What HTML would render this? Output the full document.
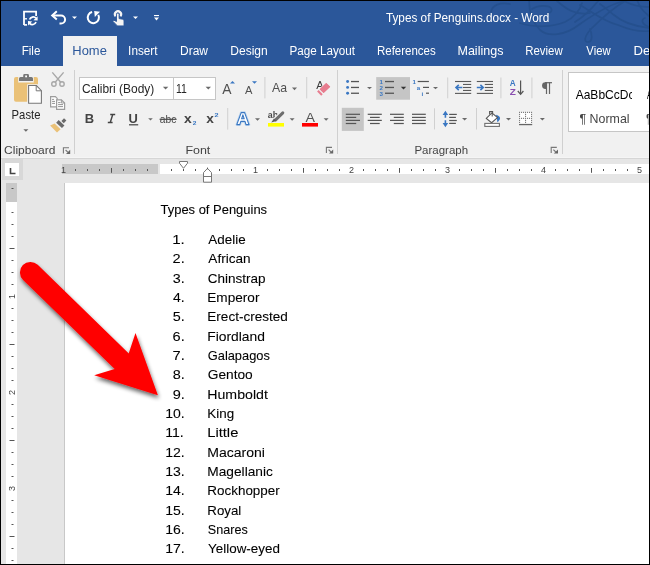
<!DOCTYPE html>
<html><head><meta charset="utf-8"><title>Types of Penguins.docx - Word</title>
<style>html,body{margin:0;padding:0;width:650px;height:565px;overflow:hidden;background:#000}svg{display:block;will-change:transform}text{font-family:"Liberation Sans",sans-serif}</style>
</head><body>
<svg width="650" height="565" viewBox="0 0 650 565" font-family="Liberation Sans, sans-serif"><rect x="0" y="0" width="650" height="565" fill="#000"/>
<rect x="1" y="1" width="648" height="65" fill="#2B579A"/>
<rect x="1" y="66" width="648" height="92" fill="#F1F1F1"/>
<rect x="1" y="157" width="648" height="1" fill="#F5F5F5"/>
<rect x="1" y="158" width="648" height="1" fill="#D6D6D6"/>
<rect x="1" y="159" width="648" height="405" fill="#E6E6E6"/>
<rect x="63" y="36" width="54" height="31" fill="#F1F1F1"/>
<g fill="none" stroke="#25508E" stroke-width="1.7" stroke-linecap="round"><path d="M491,12 C492,5 500,2 510,4"/><path d="M529,0 C529,10 532,22 540,30 C548,37 565,36 580,24 C600,10 615,2 626,1"/><path d="M520,23 C535,28 552,27 565,22 C575,17 580,10 582,3"/><path d="M532,9 C538,5 548,5 551,8 C553,11 550,13 548,13"/><path d="M557,1 C565,8 575,16 590,13"/><path d="M580,5 C592,12 605,22 618,25 C630,30 640,32 649,31"/><path d="M599,0 C594,6 588,14 575,22"/><path d="M625,1 C615,7 605,15 592,28 C585,35 583,42 588,42 C593,42 592,34 590,29"/><path d="M600,4 C606,8 610,12 614,15 C622,22 632,26 649,28"/><path d="M626,2 C632,5 640,7 649,7"/><path d="M637,0 C639,5 641,10 649,16"/><path d="M645,18 C641,19 641,24 649,27"/></g>
<text transform="translate(385.94,21.60) scale(0.9004,1)" font-size="13.08" fill="#fff" font-weight="normal" >Types of Penguins.docx - Word</text>
<text transform="translate(21.64,55.10) scale(0.8912,1)" font-size="13.08" fill="#fff" font-weight="normal" >File</text>
<text transform="translate(72.34,55.10) scale(0.9894,1)" font-size="13.08" fill="#2B579A" font-weight="normal" >Home</text>
<text transform="translate(128.12,55.10) scale(0.9007,1)" font-size="13.08" fill="#fff" font-weight="normal" >Insert</text>
<text transform="translate(180.02,55.10) scale(0.9157,1)" font-size="13.08" fill="#fff" font-weight="normal" >Draw</text>
<text transform="translate(230.31,55.10) scale(0.9201,1)" font-size="13.08" fill="#fff" font-weight="normal" >Design</text>
<text transform="translate(289.44,55.10) scale(0.8937,1)" font-size="13.08" fill="#fff" font-weight="normal" >Page Layout</text>
<text transform="translate(376.96,55.10) scale(0.8798,1)" font-size="13.08" fill="#fff" font-weight="normal" >References</text>
<text transform="translate(457.47,55.10) scale(0.9582,1)" font-size="13.08" fill="#fff" font-weight="normal" >Mailings</text>
<text transform="translate(525.26,55.10) scale(0.8749,1)" font-size="13.08" fill="#fff" font-weight="normal" >Review</text>
<text transform="translate(586.35,55.10) scale(0.8611,1)" font-size="13.08" fill="#fff" font-weight="normal" >View</text>
<text transform="translate(633.53,55.10) scale(1.0000,1)" font-size="13.08" fill="#fff" font-weight="normal" >Developer</text>
<rect x="74.0" y="70" width="1" height="84" fill="#D0D0D0"/>
<rect x="337.0" y="70" width="1" height="84" fill="#D0D0D0"/>
<rect x="562.0" y="70" width="1" height="84" fill="#D0D0D0"/>
<text transform="translate(11.57,119.00) scale(0.9046,1)" font-size="12.50" fill="#262626" font-weight="normal" >Paste</text>
<text transform="translate(4.10,154.00) scale(1.0301,1)" font-size="11.63" fill="#444" font-weight="normal" >Clipboard</text>
<text transform="translate(185.38,153.60) scale(1.0716,1)" font-size="11.63" fill="#444" font-weight="normal" >Font</text>
<text transform="translate(414.46,153.70) scale(0.9881,1)" font-size="11.63" fill="#444" font-weight="normal" >Paragraph</text>
<rect x="79.5" y="77.5" width="136" height="22" fill="#fff" stroke="#C6C6C6"/>
<rect x="173" y="78" width="1" height="21" fill="#C6C6C6"/>
<text transform="translate(81.90,92.70) scale(0.9566,1)" font-size="12.50" fill="#262626" font-weight="normal" >Calibri (Body)</text>
<text transform="translate(175.91,92.70) scale(0.8357,1)" font-size="12.50" fill="#262626" font-weight="normal" >11</text>
<rect x="568.5" y="72.5" width="90" height="59" fill="#fff" stroke="#C6C6C6"/>
<clipPath id="stc"><rect x="569" y="73" width="63" height="58"/></clipPath>
<g clip-path="url(#stc)">
<text transform="translate(575.68,98.60) scale(0.9622,1)" font-size="12.50" fill="#000" font-weight="normal" >AaBbCcDc</text>
</g>
<text transform="translate(646.98,98.60) scale(0.6042,1)" font-size="12.50" fill="#000" font-weight="normal" >A</text>
<text transform="translate(646.19,122.80) scale(0.6167,1)" font-size="12.50" fill="#444" font-weight="normal" >¶</text>
<text transform="translate(579.50,122.80) scale(0.9924,1)" font-size="12.50" fill="#444" font-weight="normal" >¶ Normal</text>
<path d="M24,25 V11.6 H36.1 V16" fill="none" stroke="#fff" stroke-width="1.8"/>
<path d="M24,24.9 H27" stroke="#fff" stroke-width="1.6"/>
<path d="M24.5,18.8 H27" stroke="#fff" stroke-width="1.3"/>
<path d="M29.6,19.6 A3.8,3.8 0 0 1 36,18.2" fill="none" stroke="#fff" stroke-width="1.7"/>
<path d="M37.6,16.2 L37.6,20.6 L33.4,20.2 Z" fill="#fff"/>
<path d="M36,22 A3.8,3.8 0 0 1 29.6,23.4" fill="none" stroke="#fff" stroke-width="1.7"/>
<path d="M28,25.4 L28,21 L32.2,21.4 Z" fill="#fff"/>
<path d="M53.5,15.4 H61 A4.1,4.1 0 0 1 61,23.6 H59.5" fill="none" stroke="#fff" stroke-width="2"/>
<path d="M56.8,11.2 L52.2,15.4 L56.8,19.6" fill="none" stroke="#fff" stroke-width="2"/>
<path d="M72,16.4 h5 l-2.5,2.6 z" fill="#fff"/>
<path d="M92.1,12.05 A5.6,5.6 0 1 0 98.3,14.9" fill="none" stroke="#fff" stroke-width="2"/>
<path d="M94.2,10.9 L100,11.7 L94.8,16.9 Z" fill="#fff"/>
<path d="M115.7,16.3 A3,3 0 1 1 120.3,16.3" fill="none" stroke="#F4F4F4" stroke-width="2.3"/>
<path d="M116.5,14.3 a1.3,1.3 0 0 1 2.6,0 V18.6 L122.6,19.2 a1.6,1.6 0 0 1 1.4,1.6 V25.9 H117.4 L112.8,21.2 L113.8,20.2 L116.5,21.4 Z" fill="#F4F4F4" stroke="#2B579A" stroke-width="0.9"/>
<path d="M133,16.4 h5 l-2.5,2.6 z" fill="#fff"/>
<rect x="154" y="15" width="5" height="1.1" fill="#fff"/>
<path d="M154,17.6 h5 l-2.5,3 z" fill="#fff"/>
<path d="M16,77 H18.2 V82.4 H33.8 V77 H36 a2,2 0 0 1 2,2 V84.2 H27.2 V101.8 H16 a2,2 0 0 1 -2,-2 V79 a2,2 0 0 1 2,-2 Z" fill="#EAC177"/>
<path d="M19,81 V78.6 a1.5,1.5 0 0 1 1.5,-1.5 H23.2 V75.4 a1.3,1.3 0 0 1 1.3,-1.3 H27.7 a1.3,1.3 0 0 1 1.3,1.3 V77.1 H31.5 a1.5,1.5 0 0 1 1.5,1.5 V81 Z" fill="#777"/>
<rect x="25.2" y="75.5" width="1.8" height="1.8" fill="#fff"/>
<path d="M28.6,85.5 H36.4 L41.4,90.6 V103.3 H28.6 Z" fill="#fff" stroke="#777" stroke-width="1.1"/>
<path d="M36.2,85.6 V90.8 H41.3" fill="none" stroke="#777" stroke-width="1"/>
<g fill="none" stroke="#A8A8A8" stroke-width="1.4"><circle cx="53.9" cy="84" r="2.2"/><circle cx="62" cy="84" r="2.2"/><path d="M55.2,82.2 L63.6,72.4 M60.7,82.2 L52.3,72.4"/></g>
<path d="M50.6,106.9 V96.6 H55.4 L57.2,98.4 V106.9 Z" fill="#FCFCFC" stroke="#9C9C9C" stroke-width="1.2"/>
<rect x="52.1" y="98.9" width="1.8" height="1.1" fill="#9C9C9C"/><rect x="52.1" y="100.9" width="2.9" height="1.1" fill="#9C9C9C"/><rect x="52.1" y="102.9" width="2.9" height="1.1" fill="#9C9C9C"/>
<path d="M56.6,109.4 V99.8 H61.4 L64.6,103 V109.4 Z" fill="#FCFCFC" stroke="#9C9C9C" stroke-width="1.2"/>
<path d="M61.4,99.8 V103 H64.6" fill="none" stroke="#9C9C9C" stroke-width="1"/>
<rect x="58.1" y="102" width="2.4" height="1.1" fill="#9C9C9C"/><rect x="58.1" y="104" width="4.9" height="1.1" fill="#9C9C9C"/><rect x="58.1" y="106" width="4.9" height="1.1" fill="#9C9C9C"/>
<path d="M50.1,125.4 L54.6,123.6 L60.6,129.2 L57,132.4 Z" fill="#EAC177"/>
<path d="M57.4,121.4 L63.2,126.8" stroke="#6A6A6A" stroke-width="3.6"/>
<path d="M62.6,122.2 L65.2,119.4" stroke="#6A6A6A" stroke-width="3.2"/>
<path d="M23.4,129.2 h5 l-2.5,2.6 z" fill="#6A6A6A"/>
<path d="M162.9,86.8 h5.4 l-2.7,2.8 z" fill="#6A6A6A"/>
<path d="M205.6,86.8 h5.4 l-2.7,2.8 z" fill="#6A6A6A"/>
<text transform="translate(222.37,93.60) scale(0.9561,1)" font-size="14.53" fill="#505050" font-weight="normal" >A</text>
<path d="M230,83.6 L232.5,81 L235,83.6 Z" fill="#3A77C2"/>
<text transform="translate(244.98,93.60) scale(1.0987,1)" font-size="10.17" fill="#505050" font-weight="normal" >A</text>
<path d="M252,81.2 L257,81.2 L254.5,83.8 Z" fill="#3A77C2"/>
<rect x="264.4" y="77" width="1" height="21.4" fill="#D0D0D0"/>
<text transform="translate(271.98,92.40) scale(0.8984,1)" font-size="13.66" fill="#505050" font-weight="normal" >Aa</text>
<path d="M292,87.6 h5 l-2.5,2.6 z" fill="#6A6A6A"/>
<rect x="306.2" y="77" width="1" height="21.4" fill="#D0D0D0"/>
<text transform="translate(316.18,88.80) scale(0.9495,1)" font-size="11.77" fill="#3A3A3A" font-weight="normal" >A</text>
<path d="M326.2,83 L330.2,86.7 L323.6,92.9 L319.7,89.2 Z" fill="#E77D8F" stroke="#F1F1F1" stroke-width="1.6" paint-order="stroke"/>
<path d="M326.2,83 L330.2,86.7 L323.6,92.9 L319.7,89.2 Z" fill="#E77D8F"/>
<path d="M318.6,90 L322.7,94.2 L321.2,95.8 L317.1,91.6 Z" fill="#E77D8F"/>
<text transform="translate(84.75,122.90) scale(1.0242,1)" font-size="12.65" fill="#444" font-weight="bold" >B</text>
<path d="M110.2,114.6 H115.2 M107.8,122.6 H112.6 M112.7,114.6 L110.2,122.6" fill="none" stroke="#444" stroke-width="1.5"/>
<text transform="translate(128.52,122.90) scale(1.0246,1)" font-size="12.65" fill="#444" font-weight="bold" >U</text>
<rect x="129" y="124.2" width="9.2" height="1.2" fill="#444"/>
<path d="M148.2,118.2 h4.6 l-2.3,2.4 z" fill="#6A6A6A"/>
<text transform="translate(159.77,122.80) scale(0.9778,1)" font-size="10.47" fill="#4A4A4A" font-weight="normal" >abc</text>
<rect x="159.6" y="118.7" width="17" height="1.2" fill="#4A4A4A"/>
<text transform="translate(183.89,123.00) scale(1.1376,1)" font-size="12.21" fill="#444" font-weight="bold" >x</text>
<text transform="translate(192.77,125.00) scale(1.0622,1)" font-size="6.25" fill="#3A77C2" font-weight="bold" >2</text>
<text transform="translate(206.19,123.00) scale(1.1224,1)" font-size="12.21" fill="#444" font-weight="bold" >x</text>
<text transform="translate(214.55,117.00) scale(1.1618,1)" font-size="6.25" fill="#3A77C2" font-weight="bold" >2</text>
<rect x="227.2" y="108" width="1" height="21.6" fill="#D0D0D0"/>
<path d="M236.8,124.6 L241.2,112.6 H244.6 L249,124.6 H246 L245,121.4 H240.8 L239.8,124.6 Z M241.6,118.8 H244.2 L242.9,114.8 Z" fill="none" stroke="#BCD5EE" stroke-width="2.6" stroke-linejoin="round" fill-rule="evenodd"/>
<path d="M236.8,124.6 L241.2,112.6 H244.6 L249,124.6 H246 L245,121.4 H240.8 L239.8,124.6 Z M241.6,118.8 H244.2 L242.9,114.8 Z" fill="#fff" stroke="#3A77C2" stroke-width="1.1" stroke-linejoin="round" fill-rule="evenodd"/>
<path d="M255,118.2 h5 l-2.5,2.6 z" fill="#6A6A6A"/>
<text transform="translate(267.83,117.80) scale(0.9368,1)" font-size="9.45" fill="#4A4A4A" font-weight="bold" >ab</text>
<path d="M275.2,120.2 L283,112.6" stroke="#F1F1F1" stroke-width="5.4"/>
<path d="M275.6,119.8 L282.8,112.8" stroke="#6E6E6E" stroke-width="3" stroke-linecap="round"/>
<path d="M271.2,122.6 L274,118.6 L276.4,121 Z" fill="#5A5A5A"/>
<rect x="268" y="123" width="16" height="3.6" fill="#FFFF00"/>
<path d="M289.6,118.2 h5 l-2.5,2.6 z" fill="#6A6A6A"/>
<text transform="translate(305.57,122.40) scale(1.0619,1)" font-size="13.37" fill="#555" font-weight="normal" >A</text>
<rect x="302" y="123" width="16" height="3.6" fill="#FF0000"/>
<path d="M323.6,118.2 h5 l-2.5,2.6 z" fill="#6A6A6A"/>
<path d="M63.4,153.4 V147.8 H69.0" fill="none" stroke="#777" stroke-width="1.1"/>
<path d="M70.2,149.8 V154.0 H66.0 Z" fill="#666"/><path d="M65.6,150.0 L68.0,152.4" stroke="#777" stroke-width="1.1"/>
<path d="M326.4,153.0 V147.4 H332.0" fill="none" stroke="#777" stroke-width="1.1"/>
<path d="M333.2,149.4 V153.6 H329.0 Z" fill="#666"/><path d="M328.59999999999997,149.6 L331.0,152.0" stroke="#777" stroke-width="1.1"/>
<path d="M551.2,153.0 V147.4 H556.8000000000001" fill="none" stroke="#777" stroke-width="1.1"/>
<path d="M558.0,149.4 V153.6 H553.8000000000001 Z" fill="#666"/><path d="M553.4000000000001,149.6 L555.8000000000001,152.0" stroke="#777" stroke-width="1.1"/>
<circle cx="347.6" cy="81.5" r="1.45" fill="#3A77C2"/>
<rect x="351" y="80.9" width="8" height="1.3" fill="#555"/>
<circle cx="347.6" cy="87.4" r="1.45" fill="#3A77C2"/>
<rect x="351" y="86.80000000000001" width="8" height="1.3" fill="#555"/>
<circle cx="347.6" cy="93.2" r="1.45" fill="#3A77C2"/>
<rect x="351" y="92.60000000000001" width="8" height="1.3" fill="#555"/>
<path d="M367,86.9 h5 l-2.5,2.4 z" fill="#6A6A6A"/>
<rect x="376.2" y="77.1" width="33.8" height="22.6" fill="#C5C5C5"/>
<text x="379.6" y="83.9" font-size="6.2" font-weight="bold" fill="#3A77C2">1</text>
<rect x="385" y="80.9" width="9" height="1.3" fill="#555"/>
<text x="379.6" y="89.80000000000001" font-size="6.2" font-weight="bold" fill="#3A77C2">2</text>
<rect x="385" y="86.80000000000001" width="9" height="1.3" fill="#555"/>
<text x="379.6" y="95.60000000000001" font-size="6.2" font-weight="bold" fill="#3A77C2">3</text>
<rect x="385" y="92.60000000000001" width="9" height="1.3" fill="#555"/>
<path d="M400.8,86.8 h5.4 l-2.7,2.6 z" fill="#333"/>
<text x="412.6" y="83.9" font-size="6.2" font-weight="bold" fill="#3A77C2">1</text>
<rect x="417.7" y="80.9" width="11.2" height="1.2" fill="#555"/>
<text x="416.8" y="89.8" font-size="6.2" font-weight="bold" fill="#3A77C2">a</text>
<rect x="423" y="86.8" width="6" height="1.2" fill="#555"/>
<text x="421.6" y="95.6" font-size="6.2" font-weight="bold" fill="#3A77C2">i</text>
<rect x="426" y="92.6" width="3" height="1.2" fill="#555"/>
<path d="M433,86.9 h5 l-2.5,2.4 z" fill="#6A6A6A"/>
<rect x="447.2" y="77.5" width="1" height="20.8" fill="#D0D0D0"/>
<rect x="455" y="80.95" width="16.2" height="1.1" fill="#5A5A5A"/>
<rect x="455" y="92.85" width="16.2" height="1.1" fill="#5A5A5A"/>
<rect x="463" y="83.9" width="8.2" height="1.1" fill="#5A5A5A"/>
<rect x="463" y="86.95" width="8.2" height="1.1" fill="#5A5A5A"/>
<rect x="463" y="89.9" width="8.2" height="1.1" fill="#5A5A5A"/>
<path d="M462.4,87.5 H456.5 M458.8,84.9 L456,87.5 L458.8,90.1" fill="none" stroke="#3A77C2" stroke-width="1.6"/>
<rect x="476.8" y="80.95" width="16.2" height="1.1" fill="#5A5A5A"/>
<rect x="476.8" y="92.85" width="16.2" height="1.1" fill="#5A5A5A"/>
<rect x="484.8" y="83.9" width="8.2" height="1.1" fill="#5A5A5A"/>
<rect x="484.8" y="86.95" width="8.2" height="1.1" fill="#5A5A5A"/>
<rect x="484.8" y="89.9" width="8.2" height="1.1" fill="#5A5A5A"/>
<path d="M476.8,87.5 H482.7 M480.40000000000003,84.9 L483.2,87.5 L480.40000000000003,90.1" fill="none" stroke="#3A77C2" stroke-width="1.6"/>
<rect x="500.4" y="77.5" width="1" height="20.8" fill="#D0D0D0"/>
<text transform="translate(509.79,85.80) scale(1.0085,1)" font-size="8.14" fill="#3A77C2" font-weight="bold" >A</text>
<text transform="translate(509.70,94.50) scale(1.1619,1)" font-size="8.58" fill="#8A4FB0" font-weight="bold" >Z</text>
<path d="M520.6,80.4 V94" stroke="#555" stroke-width="1.2"/><path d="M517.8,91 L520.6,94.4 L523.4,91" fill="none" stroke="#555" stroke-width="1.2"/>
<rect x="531.4" y="77.5" width="1" height="20.8" fill="#D0D0D0"/>
<path d="M547,82.2 H545.4 A3.35,3.35 0 0 0 545.4,88.9 H547 Z" fill="#666"/><rect x="545" y="82.1" width="7" height="1.2" fill="#666"/><rect x="545.9" y="82.2" width="1.2" height="11.8" fill="#666"/><rect x="548.9" y="82.2" width="1.2" height="11.8" fill="#666"/>
<rect x="341.8" y="107.8" width="22" height="23.1" fill="#C5C5C5"/>
<rect x="345.8" y="113.7" width="14.2" height="1.2" fill="#555"/>
<rect x="345.8" y="116.80000000000001" width="10.4" height="1.2" fill="#555"/>
<rect x="345.8" y="119.80000000000001" width="14.2" height="1.2" fill="#555"/>
<rect x="345.8" y="122.9" width="10.4" height="1.2" fill="#555"/>
<rect x="367.7" y="113.7" width="14.1" height="1.2" fill="#555"/>
<rect x="370" y="116.80000000000001" width="9.7" height="1.2" fill="#555"/>
<rect x="367.7" y="119.80000000000001" width="14.1" height="1.2" fill="#555"/>
<rect x="370" y="122.9" width="9.7" height="1.2" fill="#555"/>
<rect x="390" y="113.7" width="13.8" height="1.2" fill="#555"/>
<rect x="393.8" y="116.80000000000001" width="10.0" height="1.2" fill="#555"/>
<rect x="390" y="119.80000000000001" width="13.8" height="1.2" fill="#555"/>
<rect x="393.8" y="122.9" width="10.0" height="1.2" fill="#555"/>
<rect x="412" y="113.7" width="13.8" height="1.2" fill="#555"/>
<rect x="412" y="116.80000000000001" width="13.8" height="1.2" fill="#555"/>
<rect x="412" y="119.80000000000001" width="13.8" height="1.2" fill="#555"/>
<rect x="412" y="122.9" width="13.8" height="1.2" fill="#555"/>
<rect x="434" y="108.3" width="1" height="21.1" fill="#D0D0D0"/>
<path d="M445.4,110.8 L448.2,114.9 H446.2 V117.8 H444.6 V114.9 H442.6 Z M445.4,127.2 L448.2,123.1 H446.2 V120.2 H444.6 V123.1 H442.6 Z" fill="#3A77C2"/>
<rect x="449.2" y="113.80000000000001" width="7.6" height="1.2" fill="#555"/>
<rect x="449.2" y="116.80000000000001" width="6.7" height="1.2" fill="#555"/>
<rect x="449.2" y="119.9" width="7.6" height="1.2" fill="#555"/>
<rect x="449.2" y="122.80000000000001" width="6.7" height="1.2" fill="#555"/>
<path d="M462,117.9 h5.2 l-2.6,2.6 z" fill="#6A6A6A"/>
<rect x="476" y="108" width="1" height="21.5" fill="#D0D0D0"/>
<path d="M496,114.8 C499,115.6 500.6,117.4 500,119 C499.4,120.6 498.2,121.6 497.4,122.2 L496.8,118.6 Z" fill="#3A77C2"/>
<path d="M486.3,118.4 L491.9,112.9 L497.5,117.6 L491.6,122.7 Z" fill="#fff" stroke="#555" stroke-width="1.05"/>
<path d="M489.6,114.6 V111.6 H492.6 V113.6 M492.2,113 V116.4" fill="none" stroke="#555" stroke-width="1.05"/>
<rect x="484.8" y="123.4" width="14.6" height="3" fill="#fff" stroke="#707070" stroke-width="1.1"/>
<path d="M506,117.9 h5 l-2.5,2.6 z" fill="#6A6A6A"/>
<rect x="519" y="111.8" width="13" height="12.2" fill="#fff"/>
<g fill="#707070">
<rect x="519.0" y="111.8" width="1.1" height="1.1"/>
<rect x="519.0" y="113.8" width="1.1" height="1.1"/>
<rect x="519.0" y="115.8" width="1.1" height="1.1"/>
<rect x="519.0" y="117.8" width="1.1" height="1.1"/>
<rect x="519.0" y="119.8" width="1.1" height="1.1"/>
<rect x="519.0" y="121.8" width="1.1" height="1.1"/>
<rect x="521.0" y="111.8" width="1.1" height="1.1"/>
<rect x="521.0" y="117.8" width="1.1" height="1.1"/>
<rect x="523.0" y="111.8" width="1.1" height="1.1"/>
<rect x="523.0" y="117.8" width="1.1" height="1.1"/>
<rect x="525.0" y="111.8" width="1.1" height="1.1"/>
<rect x="525.0" y="113.8" width="1.1" height="1.1"/>
<rect x="525.0" y="115.8" width="1.1" height="1.1"/>
<rect x="525.0" y="117.8" width="1.1" height="1.1"/>
<rect x="525.0" y="119.8" width="1.1" height="1.1"/>
<rect x="525.0" y="121.8" width="1.1" height="1.1"/>
<rect x="527.0" y="111.8" width="1.1" height="1.1"/>
<rect x="527.0" y="117.8" width="1.1" height="1.1"/>
<rect x="529.0" y="111.8" width="1.1" height="1.1"/>
<rect x="529.0" y="117.8" width="1.1" height="1.1"/>
<rect x="531.0" y="111.8" width="1.1" height="1.1"/>
<rect x="531.0" y="113.8" width="1.1" height="1.1"/>
<rect x="531.0" y="115.8" width="1.1" height="1.1"/>
<rect x="531.0" y="117.8" width="1.1" height="1.1"/>
<rect x="531.0" y="119.8" width="1.1" height="1.1"/>
<rect x="531.0" y="121.8" width="1.1" height="1.1"/>
</g>
<rect x="519" y="123.9" width="13.2" height="1.3" fill="#666"/>
<path d="M539.9,117.9 h5 l-2.5,2.6 z" fill="#6A6A6A"/>
<rect x="2" y="159" width="21" height="21" fill="#D8D8D8"/>
<rect x="5" y="163" width="14" height="13" fill="#fff"/>
<path d="M10.5,168 V173.5 H15.5" fill="none" stroke="#444" stroke-width="1.6"/>
<rect x="62" y="164" width="96" height="10" fill="#C8C8C8"/>
<rect x="160" y="164" width="489" height="10" fill="#fff"/>
<rect x="6" y="183" width="11" height="19" fill="#C8C8C8"/>
<rect x="6" y="202" width="11" height="362" fill="#fff"/>
<rect x="64" y="183" width="1" height="381" fill="#C8C8C8"/>
<rect x="65" y="183" width="584" height="381" fill="#fff"/>
<text x="63.5" y="172.8" font-size="9" fill="#444" text-anchor="middle">1</text>
<rect x="75.0" y="169" width="1" height="2" fill="#555"/>
<rect x="87.0" y="169" width="1" height="2" fill="#555"/>
<rect x="99.0" y="169" width="1" height="2" fill="#555"/>
<rect x="111.0" y="168" width="1" height="4.8" fill="#555"/>
<rect x="123.0" y="169" width="1" height="2" fill="#555"/>
<rect x="135.0" y="169" width="1" height="2" fill="#555"/>
<rect x="147.0" y="169" width="1" height="2" fill="#555"/>
<rect x="171.0" y="169" width="1" height="2" fill="#555"/>
<rect x="183.0" y="169" width="1" height="2" fill="#555"/>
<rect x="195.0" y="169" width="1" height="2" fill="#555"/>
<rect x="207.0" y="168" width="1" height="4.8" fill="#555"/>
<rect x="219.0" y="169" width="1" height="2" fill="#555"/>
<rect x="231.0" y="169" width="1" height="2" fill="#555"/>
<rect x="243.0" y="169" width="1" height="2" fill="#555"/>
<text x="255.5" y="172.8" font-size="9" fill="#444" text-anchor="middle">1</text>
<rect x="267.0" y="169" width="1" height="2" fill="#555"/>
<rect x="279.0" y="169" width="1" height="2" fill="#555"/>
<rect x="291.0" y="169" width="1" height="2" fill="#555"/>
<rect x="303.0" y="168" width="1" height="4.8" fill="#555"/>
<rect x="315.0" y="169" width="1" height="2" fill="#555"/>
<rect x="327.0" y="169" width="1" height="2" fill="#555"/>
<rect x="339.0" y="169" width="1" height="2" fill="#555"/>
<text x="351.5" y="172.8" font-size="9" fill="#444" text-anchor="middle">2</text>
<rect x="363.0" y="169" width="1" height="2" fill="#555"/>
<rect x="375.0" y="169" width="1" height="2" fill="#555"/>
<rect x="387.0" y="169" width="1" height="2" fill="#555"/>
<rect x="399.0" y="168" width="1" height="4.8" fill="#555"/>
<rect x="411.0" y="169" width="1" height="2" fill="#555"/>
<rect x="423.0" y="169" width="1" height="2" fill="#555"/>
<rect x="435.0" y="169" width="1" height="2" fill="#555"/>
<text x="447.5" y="172.8" font-size="9" fill="#444" text-anchor="middle">3</text>
<rect x="459.0" y="169" width="1" height="2" fill="#555"/>
<rect x="471.0" y="169" width="1" height="2" fill="#555"/>
<rect x="483.0" y="169" width="1" height="2" fill="#555"/>
<rect x="495.0" y="168" width="1" height="4.8" fill="#555"/>
<rect x="507.0" y="169" width="1" height="2" fill="#555"/>
<rect x="519.0" y="169" width="1" height="2" fill="#555"/>
<rect x="531.0" y="169" width="1" height="2" fill="#555"/>
<text x="543.5" y="172.8" font-size="9" fill="#444" text-anchor="middle">4</text>
<rect x="555.0" y="169" width="1" height="2" fill="#555"/>
<rect x="567.0" y="169" width="1" height="2" fill="#555"/>
<rect x="579.0" y="169" width="1" height="2" fill="#555"/>
<rect x="591.0" y="168" width="1" height="4.8" fill="#555"/>
<rect x="603.0" y="169" width="1" height="2" fill="#555"/>
<rect x="615.0" y="169" width="1" height="2" fill="#555"/>
<rect x="627.0" y="169" width="1" height="2" fill="#555"/>
<text x="639.5" y="172.8" font-size="9" fill="#444" text-anchor="middle">5</text>
<path d="M179.5,161.5 H187.5 V163.2 L183.5,168.3 L179.5,163.2 Z" fill="#fff" stroke="#777" stroke-width="1"/>
<path d="M203.5,182.2 V172.6 L207.5,168.4 L211.5,172.6 V182.2 Z M203.5,176.5 H211.5" fill="#fff" stroke="#777" stroke-width="1"/><rect x="207" y="167.6" width="1" height="1.6" fill="#555"/>
<rect x="11.5" y="188.0" width="2" height="1" fill="#555"/>
<rect x="11.5" y="212.0" width="2" height="1" fill="#555"/>
<rect x="11.5" y="224.0" width="2" height="1" fill="#555"/>
<rect x="11.5" y="236.0" width="2" height="1" fill="#555"/>
<rect x="9.5" y="248.0" width="5" height="1" fill="#555"/>
<rect x="11.5" y="260.0" width="2" height="1" fill="#555"/>
<rect x="11.5" y="272.0" width="2" height="1" fill="#555"/>
<rect x="11.5" y="284.0" width="2" height="1" fill="#555"/>
<text transform="translate(15.2,296.5) rotate(-90)" font-size="9" fill="#444" text-anchor="middle">1</text>
<rect x="11.5" y="308.0" width="2" height="1" fill="#555"/>
<rect x="11.5" y="320.0" width="2" height="1" fill="#555"/>
<rect x="11.5" y="332.0" width="2" height="1" fill="#555"/>
<rect x="9.5" y="344.0" width="5" height="1" fill="#555"/>
<rect x="11.5" y="356.0" width="2" height="1" fill="#555"/>
<rect x="11.5" y="368.0" width="2" height="1" fill="#555"/>
<rect x="11.5" y="380.0" width="2" height="1" fill="#555"/>
<text transform="translate(15.2,392.5) rotate(-90)" font-size="9" fill="#444" text-anchor="middle">2</text>
<rect x="11.5" y="404.0" width="2" height="1" fill="#555"/>
<rect x="11.5" y="416.0" width="2" height="1" fill="#555"/>
<rect x="11.5" y="428.0" width="2" height="1" fill="#555"/>
<rect x="9.5" y="440.0" width="5" height="1" fill="#555"/>
<rect x="11.5" y="452.0" width="2" height="1" fill="#555"/>
<rect x="11.5" y="464.0" width="2" height="1" fill="#555"/>
<rect x="11.5" y="476.0" width="2" height="1" fill="#555"/>
<text transform="translate(15.2,488.5) rotate(-90)" font-size="9" fill="#444" text-anchor="middle">3</text>
<rect x="11.5" y="500.0" width="2" height="1" fill="#555"/>
<rect x="11.5" y="512.0" width="2" height="1" fill="#555"/>
<rect x="11.5" y="524.0" width="2" height="1" fill="#555"/>
<rect x="9.5" y="536.0" width="5" height="1" fill="#555"/>
<rect x="11.5" y="548.0" width="2" height="1" fill="#555"/>
<rect x="11.5" y="560.0" width="2" height="1" fill="#555"/>
<text transform="translate(160.51,214.40) scale(0.9693,1)" font-size="13.37" fill="#000" font-weight="normal" stroke="#000" stroke-width="0.08">Types of Penguins</text>
<text transform="translate(172.15,244.10) scale(1.1593,1)" font-size="13.08" fill="#000" font-weight="normal" stroke="#000" stroke-width="0.08">1.</text>
<text transform="translate(208.37,244.10) scale(1.0262,1)" font-size="13.08" fill="#000" font-weight="normal" stroke="#000" stroke-width="0.08">Adelie</text>
<text transform="translate(172.57,263.42) scale(1.1157,1)" font-size="13.08" fill="#000" font-weight="normal" stroke="#000" stroke-width="0.08">2.</text>
<text transform="translate(208.37,263.42) scale(1.0408,1)" font-size="13.08" fill="#000" font-weight="normal" stroke="#000" stroke-width="0.08">African</text>
<text transform="translate(172.75,282.74) scale(1.0967,1)" font-size="13.08" fill="#000" font-weight="normal" stroke="#000" stroke-width="0.08">3.</text>
<text transform="translate(207.72,282.74) scale(1.0331,1)" font-size="13.08" fill="#000" font-weight="normal" stroke="#000" stroke-width="0.08">Chinstrap</text>
<text transform="translate(172.99,302.06) scale(1.0723,1)" font-size="13.08" fill="#000" font-weight="normal" stroke="#000" stroke-width="0.08">4.</text>
<text transform="translate(207.28,302.06) scale(1.0409,1)" font-size="13.08" fill="#000" font-weight="normal" stroke="#000" stroke-width="0.08">Emperor</text>
<text transform="translate(172.72,321.38) scale(1.0998,1)" font-size="13.08" fill="#000" font-weight="normal" stroke="#000" stroke-width="0.08">5.</text>
<text transform="translate(207.29,321.38) scale(1.0366,1)" font-size="13.08" fill="#000" font-weight="normal" stroke="#000" stroke-width="0.08">Erect-crested</text>
<text transform="translate(172.57,340.70) scale(1.1157,1)" font-size="13.08" fill="#000" font-weight="normal" stroke="#000" stroke-width="0.08">6.</text>
<text transform="translate(207.26,340.70) scale(1.0587,1)" font-size="13.08" fill="#000" font-weight="normal" stroke="#000" stroke-width="0.08">Fiordland</text>
<text transform="translate(172.54,360.02) scale(1.1190,1)" font-size="13.08" fill="#000" font-weight="normal" stroke="#000" stroke-width="0.08">7.</text>
<text transform="translate(207.76,360.02) scale(0.9817,1)" font-size="13.08" fill="#000" font-weight="normal" stroke="#000" stroke-width="0.08">Galapagos</text>
<text transform="translate(172.66,379.34) scale(1.1061,1)" font-size="13.08" fill="#000" font-weight="normal" stroke="#000" stroke-width="0.08">8.</text>
<text transform="translate(207.71,379.34) scale(1.0503,1)" font-size="13.08" fill="#000" font-weight="normal" stroke="#000" stroke-width="0.08">Gentoo</text>
<text transform="translate(172.63,398.66) scale(1.1093,1)" font-size="13.08" fill="#000" font-weight="normal" stroke="#000" stroke-width="0.08">9.</text>
<text transform="translate(207.24,398.66) scale(1.0837,1)" font-size="13.08" fill="#000" font-weight="normal" stroke="#000" stroke-width="0.08">Humboldt</text>
<text transform="translate(165.13,417.98) scale(1.0760,1)" font-size="13.08" fill="#000" font-weight="normal" stroke="#000" stroke-width="0.08">10.</text>
<text transform="translate(207.30,417.98) scale(1.0256,1)" font-size="13.08" fill="#000" font-weight="normal" stroke="#000" stroke-width="0.08">King</text>
<text transform="translate(165.13,437.30) scale(1.0777,1)" font-size="13.08" fill="#000" font-weight="normal" stroke="#000" stroke-width="0.08">11.</text>
<text transform="translate(207.19,437.30) scale(1.1278,1)" font-size="13.08" fill="#000" font-weight="normal" stroke="#000" stroke-width="0.08">Little</text>
<text transform="translate(165.13,456.62) scale(1.0760,1)" font-size="13.08" fill="#000" font-weight="normal" stroke="#000" stroke-width="0.08">12.</text>
<text transform="translate(207.25,456.62) scale(1.0742,1)" font-size="13.08" fill="#000" font-weight="normal" stroke="#000" stroke-width="0.08">Macaroni</text>
<text transform="translate(165.13,475.94) scale(1.0760,1)" font-size="13.08" fill="#000" font-weight="normal" stroke="#000" stroke-width="0.08">13.</text>
<text transform="translate(207.27,475.94) scale(1.0505,1)" font-size="13.08" fill="#000" font-weight="normal" stroke="#000" stroke-width="0.08">Magellanic</text>
<text transform="translate(165.13,495.26) scale(1.0760,1)" font-size="13.08" fill="#000" font-weight="normal" stroke="#000" stroke-width="0.08">14.</text>
<text transform="translate(207.30,495.26) scale(1.0285,1)" font-size="13.08" fill="#000" font-weight="normal" stroke="#000" stroke-width="0.08">Rockhopper</text>
<text transform="translate(165.13,514.58) scale(1.0760,1)" font-size="13.08" fill="#000" font-weight="normal" stroke="#000" stroke-width="0.08">15.</text>
<text transform="translate(207.31,514.58) scale(1.0159,1)" font-size="13.08" fill="#000" font-weight="normal" stroke="#000" stroke-width="0.08">Royal</text>
<text transform="translate(165.13,533.90) scale(1.0760,1)" font-size="13.08" fill="#000" font-weight="normal" stroke="#000" stroke-width="0.08">16.</text>
<text transform="translate(207.82,533.90) scale(0.9655,1)" font-size="13.08" fill="#000" font-weight="normal" stroke="#000" stroke-width="0.08">Snares</text>
<text transform="translate(165.13,553.22) scale(1.0760,1)" font-size="13.08" fill="#000" font-weight="normal" stroke="#000" stroke-width="0.08">17.</text>
<text transform="translate(208.10,553.22) scale(1.0254,1)" font-size="13.08" fill="#000" font-weight="normal" stroke="#000" stroke-width="0.08">Yellow-eyed</text>
<defs><filter id="sh" x="-20%" y="-20%" width="140%" height="140%"><feGaussianBlur in="SourceAlpha" stdDeviation="2"/><feOffset dx="0.5" dy="3"/><feComponentTransfer><feFuncA type="linear" slope="0.6"/></feComponentTransfer><feMerge><feMergeNode/><feMergeNode in="SourceGraphic"/></feMerge></filter></defs>
<g filter="url(#sh)"><line x1="30.4" y1="272.4" x2="122" y2="361.5" stroke="#FF0000" stroke-width="21" stroke-linecap="round"/><path d="M128.6,353.7 L135.5,333 L157.9,395.3 L94.2,375.2 L114.7,368.9 Z" fill="#FF0000"/></g>
<path d="M0,0 H650 V565 H0 Z M1,1 V564 H649 V1 Z" fill="#000" fill-rule="evenodd"/></svg>
</body></html>
